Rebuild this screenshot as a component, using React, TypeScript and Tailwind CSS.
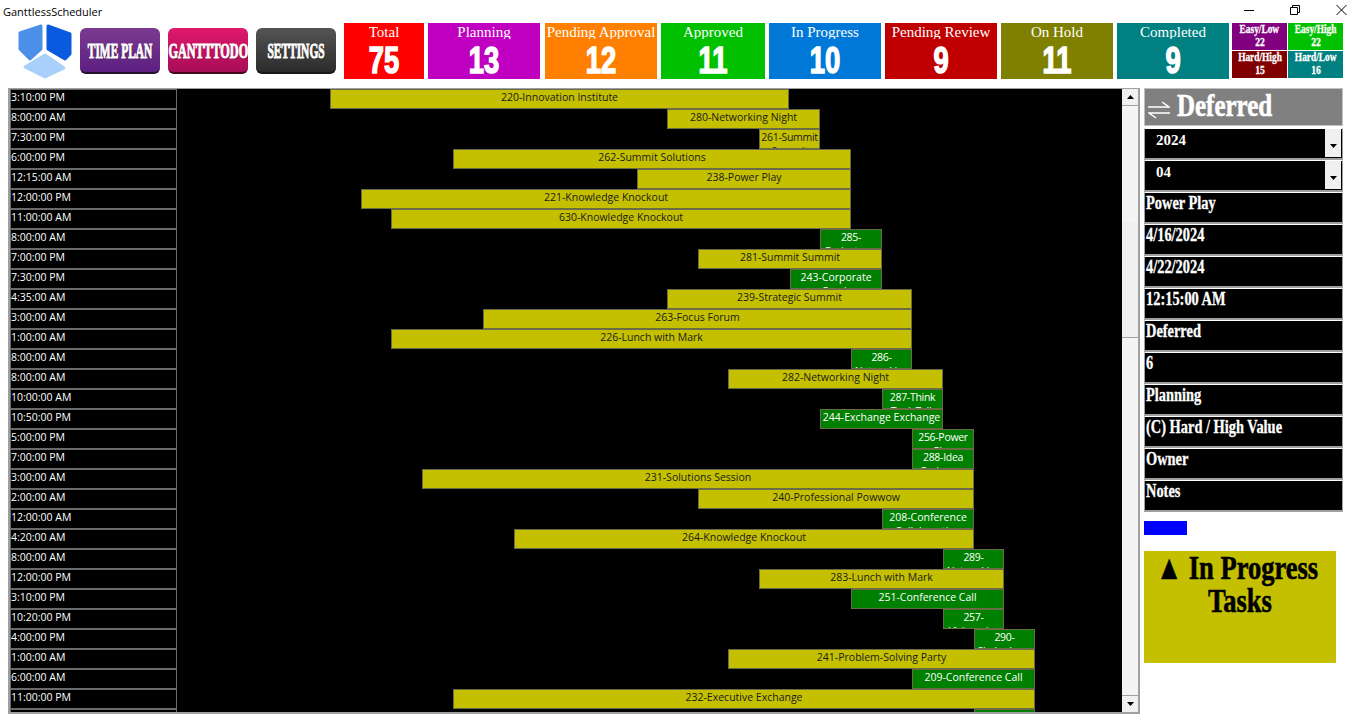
const tasks: [string, string, number, number, 'y' | 'g'][] = [
  ['3:10:00 PM', '220-Innovation Institute', 330, 789, 'y'],
  ['8:00:00 AM', '280-Networking Night', 667, 820, 'y'],
  ['7:30:00 PM', '261-Summit Summit', 759, 820, 'y'],
  ['6:00:00 PM', '262-Summit Solutions', 453, 851, 'y'],
  ['12:15:00 AM', '238-Power Play', 637, 851, 'y'],
  ['12:00:00 PM', '221-Knowledge Knockout', 361, 851, 'y'],
  ['11:00:00 AM', '630-Knowledge Knockout', 391, 851, 'y'],
  ['8:00:00 AM', '285-Brainstorm', 820, 882, 'g'],
  ['7:00:00 PM', '281-Summit Summit', 698, 882, 'y'],
  ['7:30:00 PM', '243-Corporate Crush', 790, 882, 'g'],
  ['4:35:00 AM', '239-Strategic Summit', 667, 912, 'y'],
  ['3:00:00 AM', '263-Focus Forum', 483, 912, 'y'],
  ['1:00:00 AM', '226-Lunch with Mark', 391, 912, 'y'],
  ['8:00:00 AM', '286-Networking', 851, 912, 'g'],
  ['8:00:00 AM', '282-Networking Night', 728, 943, 'y'],
  ['10:00:00 AM', '287-Think Tank Talk', 882, 943, 'g'],
  ['10:50:00 PM', '244-Exchange Exchange', 820, 943, 'g'],
  ['5:00:00 PM', '256-Power Play', 912, 974, 'g'],
  ['7:00:00 PM', '288-Idea Exchange', 912, 974, 'g'],
  ['3:00:00 AM', '231-Solutions Session', 422, 974, 'y'],
  ['2:00:00 AM', '240-Professional Powwow', 698, 974, 'y'],
  ['12:00:00 AM', '208-Conference Collaboration', 882, 974, 'g'],
  ['4:20:00 AM', '264-Knowledge Knockout', 514, 974, 'y'],
  ['8:00:00 AM', '289-Networking', 943, 1004, 'g'],
  ['12:00:00 PM', '283-Lunch with Mark', 759, 1004, 'y'],
  ['3:10:00 PM', '251-Conference Call', 851, 1004, 'g'],
  ['10:20:00 PM', '257-Visionaries', 943, 1004, 'g'],
  ['4:00:00 PM', '290-Shakedown', 974, 1035, 'g'],
  ['1:00:00 AM', '241-Problem-Solving Party', 728, 1035, 'y'],
  ['6:00:00 AM', '209-Conference Call', 912, 1035, 'g'],
  ['11:00:00 PM', '232-Executive Exchange', 453, 1035, 'y'],
  ['8:00:00 AM', '291-Review', 974, 1035, 'g'],
];

const stats = [
  { label: 'Total', value: 75, w: 'w-[80px]', bg: 'bg-[#ff0000]' },
  { label: 'Planning', value: 13, w: 'w-[112px]', bg: 'bg-[#c000c0]' },
  { label: 'Pending Approval', value: 12, w: 'w-[112px] ml-px', bg: 'bg-[#ff8000]' },
  { label: 'Approved', value: 11, w: 'w-[104px]', bg: 'bg-[#00c000]' },
  { label: 'In Progress', value: 10, w: 'w-[112px]', bg: 'bg-[#0078d7]' },
  { label: 'Pending Review', value: 9, w: 'w-[112px]', bg: 'bg-[#c00000]' },
  { label: 'On Hold', value: 11, w: 'w-[112px]', bg: 'bg-[#808000]' },
  { label: 'Completed', value: 9, w: 'w-[112px]', bg: 'bg-[#008080]' },
];

const quads = [
  { label: 'Easy/Low', value: 22, bg: 'bg-[#800080]' },
  { label: 'Easy/High', value: 22, bg: 'bg-[#00c000]' },
  { label: 'Hard/High', value: 15, bg: 'bg-[#800000]' },
  { label: 'Hard/Low', value: 16, bg: 'bg-[#008080]' },
];

const fields = ['Power Play', '4/16/2024', '4/22/2024', '12:15:00 AM', 'Deferred', '6', 'Planning', '(C) Hard / High Value', 'Owner', 'Notes'];

const heavy = "font-['Liberation_Serif',serif] font-bold";

function Logo() {
  return (
    <svg width="56" height="58" viewBox="0 0 56 58" className="shrink-0">
      <g strokeLinejoin="round" strokeWidth="3">
        <path d="M4 10 L25 3 L25 26 L14 36 L4 26 Z" fill="#4a90e8" stroke="#4a90e8" />
        <path d="M32 3 L54 11 L54 31 L49 36 L32 26 Z" fill="#0a5ae0" stroke="#0a5ae0" />
        <path d="M9 44 L29 32 L48 45 L29 54 Z" fill="#a8d0fa" stroke="#a8d0fa" />
      </g>
    </svg>
  );
}

function NavButton({ label, bg, squeeze }: { label: string; bg: string; squeeze: string }) {
  return (
    <div className={`flex h-[46px] w-[80px] items-center justify-center overflow-hidden rounded-md border-b-2 border-black/70 ${bg}`}>
      <span className={`${heavy} inline-block whitespace-nowrap text-[22px] text-white [-webkit-text-stroke:1px_white] [text-shadow:1px_1px_1px_#0008] ${squeeze}`}>
        {label}
      </span>
    </div>
  );
}

function ComboArrow() {
  return (
    <div className="flex h-[28px] w-[16px] items-center justify-center bg-[#f0f0f0] pt-[6px]">
      <svg width="7" height="4" viewBox="0 0 7 4"><path d="M0 0 H7 L3.5 4 Z" fill="#000" /></svg>
    </div>
  );
}

export default function App() {
  return (
    <div className="h-[726px] w-[1366px] overflow-hidden bg-white font-['Open_Sans',sans-serif]">
      <div className="flex h-[23px] items-start justify-between">
        <div className="pl-[3px] pt-[4px] text-[11px] leading-[16px] text-black">GanttlessScheduler</div>
        <div className="flex items-center gap-[36px] pr-[19px] pt-[4px]">
          <svg width="10" height="12" viewBox="0 0 10 12"><path d="M0 6.5 H10" stroke="#000" /></svg>
          <svg width="10" height="12" viewBox="0 0 10 12" fill="none" stroke="#000"><path d="M0.5 3.5 H7.5 V10.5 H0.5 Z M2.5 3.5 V1.5 H9.5 V8.5 H7.5" /></svg>
          <svg width="11" height="12" viewBox="0 0 11 12" fill="none" stroke="#000"><path d="M0.5 1 L10.5 11 M10.5 1 L0.5 11" /></svg>
        </div>
      </div>

      <div className="flex h-[65px] items-start pl-[16px]">
        <Logo />
        <div className="ml-[8px] mt-[5px] flex gap-[8px]">
          <NavButton label="TIME PLAN" squeeze="scale-x-[0.52]" bg="bg-gradient-to-b from-[#7b3a90] to-[#5c1f80]" />
          <NavButton label="GANTTTODO" squeeze="scale-x-[0.56]" bg="bg-gradient-to-b from-[#e0186c] to-[#a80c58]" />
          <NavButton label="SETTINGS" squeeze="scale-x-[0.52]" bg="bg-gradient-to-b from-[#555555] to-[#2b2b2b]" />
        </div>
        <div className="ml-[8px] flex gap-[4px]">
          {stats.map((s) => (
            <div key={s.label} className={`flex h-[56px] flex-col items-center overflow-hidden text-white ${s.w} ${s.bg}`}>
              <div className="h-[16px] overflow-hidden whitespace-nowrap font-['Liberation_Serif',serif] text-[15px] leading-[18px]">{s.label}</div>
              <div className="mt-[4px] inline-block scale-x-[0.76] font-['Liberation_Sans',sans-serif] text-[36px] font-bold leading-[36px] [-webkit-text-stroke:1.5px_white]">
                {s.value}
              </div>
            </div>
          ))}
        </div>
        <div className="ml-[3px] grid w-[111px] grid-cols-2 gap-px">
          {quads.map((q) => (
            <div key={q.label} className={`flex h-[27px] flex-col items-center overflow-hidden text-white ${q.bg}`}>
              <span className={`${heavy} inline-block scale-x-[0.78] whitespace-nowrap text-[12px] leading-[13px] [-webkit-text-stroke:0.3px_white]`}>{q.label}</span>
              <span className={`${heavy} inline-block scale-x-[0.8] text-[12px] leading-[13px] [-webkit-text-stroke:0.3px_white]`}>{q.value}</span>
            </div>
          ))}
        </div>
      </div>

      <div className="flex items-start gap-[4px] pl-[8px]">
        <div className="flex h-[626px] w-[1132px] overflow-hidden border-2 border-t border-[#a0a0a0] bg-black">
          <div className="min-w-0 flex-1 overflow-hidden">
            {tasks.map(([time, name, start, end, kind], i) => (
              <div key={i} className="flex h-[20px]">
                <div className="h-[20px] w-[167px] shrink-0 border border-[#6a6a6a] text-[10.5px] leading-[14px] text-white">{time}</div>
                <div
                  className={`h-[20px] shrink-0 overflow-hidden border border-[#6b6b45] text-center text-[10.5px] leading-[14px] ${
                    kind === 'y' ? 'bg-[#c4c000] text-[#1a1a1a]' : 'bg-[#008000] text-white'
                  } ${end - start < 70 ? 'tracking-[-0.3px]' : ''}`}
                  style={{ marginLeft: start - 177, width: end - start }}
                >
                  {name}
                </div>
              </div>
            ))}
          </div>
          <div className="flex w-[16px] shrink-0 flex-col bg-[#f4f4f4]">
            <div className="flex h-[17px] items-center justify-center border-b border-[#a0a0a0] bg-[#f0f0f0]">
              <svg width="7" height="4" viewBox="0 0 7 4"><path d="M0 4 H7 L3.5 0 Z" fill="#000" /></svg>
            </div>
            <div className="mt-[116px] h-[116px] border-b border-[#a0a0a0] bg-[#f0f0f0]" />
            <div className="mt-auto flex h-[17px] items-center justify-center border-t border-[#a0a0a0] bg-[#f0f0f0]">
              <svg width="7" height="4" viewBox="0 0 7 4"><path d="M0 0 H7 L3.5 4 Z" fill="#000" /></svg>
            </div>
          </div>
        </div>

        <div className="w-[199px]">
          <div className="mb-[2px] flex h-[38px] items-center gap-[7px] border border-[#c0c0c0] bg-[#808080] pl-[3px]">
            <svg width="22" height="18" viewBox="0 0 22 18" fill="none" stroke="#fff" strokeWidth="1.5" className="mt-[6px]">
              <path d="M0 6 H21 L14 1 M22 12 H1 L8 17" />
            </svg>
            <span className={`${heavy} mb-[5px] inline-block origin-left scale-x-[0.78] whitespace-nowrap text-[32px] leading-[34px] text-white [-webkit-text-stroke:0.6px_white]`}>
              Deferred
            </span>
          </div>
          {['2024', '04'].map((v) => (
            <div key={v} className="flex h-[32px] justify-between border-x border-b-2 border-t border-[#a0a0a0] border-t-white bg-black pl-[11px] pr-px">
              <span className={`${heavy} text-[15px] leading-[22px] text-white`}>{v}</span>
              <ComboArrow />
            </div>
          ))}
          {fields.map((f) => (
            <div key={f} className="h-[32px] overflow-hidden border-x border-b-2 border-t border-[#a0a0a0] border-t-white bg-black pl-px">
              <span className={`${heavy} block origin-left scale-x-[0.8] whitespace-nowrap text-[18px] leading-[20px] text-white [-webkit-text-stroke:0.3px_white]`}>
                {f}
              </span>
            </div>
          ))}
          <div className="mt-[9px] h-[14px] w-[43px] bg-[#0000ff]" />
          <div className="mt-[16px] flex h-[112px] w-[192px] flex-col items-center bg-[#c4c000] text-black">
            <span className={`${heavy} -ml-[6px] inline-block scale-x-[0.78] whitespace-nowrap text-[34px] leading-[33px] [-webkit-text-stroke:0.6px_black]`}>▲ In Progress</span>
            <span className={`${heavy} inline-block scale-x-[0.78] whitespace-nowrap text-[34px] leading-[33px] [-webkit-text-stroke:0.6px_black]`}>Tasks</span>
          </div>
        </div>
      </div>
    </div>
  );
}
